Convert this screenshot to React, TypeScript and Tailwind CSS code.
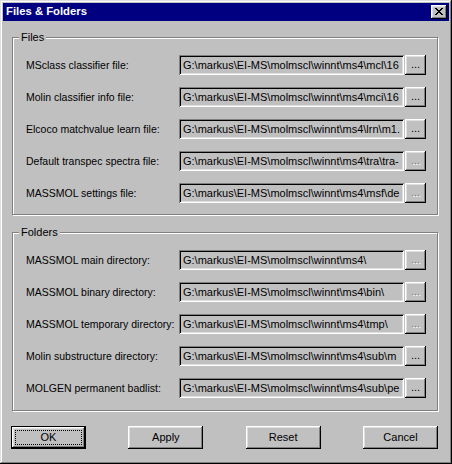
const FONT = { fontFamily: '"Liberation Sans", Arial, sans-serif' }

const RAISED =
  'shadow-[inset_-1px_-1px_0_#000,inset_1px_1px_0_#fff,inset_-2px_-2px_0_#808080,inset_2px_2px_0_#dfdfdf]'
const SUNKEN =
  'shadow-[inset_1px_1px_0_#808080,inset_-1px_-1px_0_#fff,inset_2px_2px_0_#000,inset_-2px_-2px_0_#dfdfdf]'

interface PathRow {
  label: string
  value: string
  disabled?: boolean
}

const FILES: PathRow[] = [
  { label: 'MSclass classifier file:', value: 'G:\\markus\\EI-MS\\molmscl\\winnt\\ms4\\mcl\\16' },
  { label: 'Molin classifier info file:', value: 'G:\\markus\\EI-MS\\molmscl\\winnt\\ms4\\mci\\16' },
  { label: 'Elcoco matchvalue learn file:', value: 'G:\\markus\\EI-MS\\molmscl\\winnt\\ms4\\lrn\\m1.' },
  { label: 'Default transpec spectra file:', value: 'G:\\markus\\EI-MS\\molmscl\\winnt\\ms4\\tra\\tra-', disabled: true },
  { label: 'MASSMOL settings file:', value: 'G:\\markus\\EI-MS\\molmscl\\winnt\\ms4\\msf\\de', disabled: true },
]

const FOLDERS: PathRow[] = [
  { label: 'MASSMOL main directory:', value: 'G:\\markus\\EI-MS\\molmscl\\winnt\\ms4\\', disabled: true },
  { label: 'MASSMOL binary directory:', value: 'G:\\markus\\EI-MS\\molmscl\\winnt\\ms4\\bin\\', disabled: true },
  { label: 'MASSMOL temporary directory:', value: 'G:\\markus\\EI-MS\\molmscl\\winnt\\ms4\\tmp\\', disabled: true },
  { label: 'Molin substructure directory:', value: 'G:\\markus\\EI-MS\\molmscl\\winnt\\ms4\\sub\\m' },
  { label: 'MOLGEN permanent badlist:', value: 'G:\\markus\\EI-MS\\molmscl\\winnt\\ms4\\sub\\pe' },
]

function Row({ row }: { row: PathRow }) {
  return (
    <div className="flex items-center h-[20px]">
      <span className="w-[153px] shrink-0 text-[10.5px] text-black whitespace-nowrap leading-none">{row.label}</span>
      <div className={`w-[225px] h-[20px] shrink-0 bg-[#c0c0c0] ${SUNKEN} flex items-center pl-[4px] pr-[2px] overflow-hidden`}>
        <span className="text-[11px] text-black whitespace-nowrap leading-none">{row.value}</span>
      </div>
      <button
        className={`ml-[1px] w-[21px] h-[20px] shrink-0 bg-[#c0c0c0] ${RAISED} flex items-center justify-center text-[11px] leading-none pb-[1px] ${
          row.disabled ? 'text-[#808080] [text-shadow:1px_1px_0_#fff]' : 'text-black'
        }`}
      >
        ...
      </button>
    </div>
  )
}

function Group({ title, rows, height }: { title: string; rows: PathRow[]; height: string }) {
  return (
    <div
      className={`relative ml-[9px] w-[426px] ${height} border border-[#808080] shadow-[1px_1px_0_#fff,inset_1px_1px_0_#fff] pt-[17px] pl-[13px] flex flex-col gap-[12px]`}
    >
      <span className="absolute top-[-7px] left-[6px] px-[2px] bg-[#c0c0c0] text-[11px] leading-[13px] text-black">
        {title}
      </span>
      {rows.map((r) => (
        <Row key={r.label} row={r} />
      ))}
    </div>
  )
}

function DialogButton({ label, isDefault }: { label: string; isDefault?: boolean }) {
  if (isDefault) {
    return (
      <button className="relative w-[75px] h-[23px] border border-black bg-[#c0c0c0] flex items-center justify-center">
        <span className={`absolute inset-0 ${RAISED}`} />
        <span className="absolute inset-[3px] border border-dotted border-black" />
        <span className="relative text-[11px] leading-none text-black">{label}</span>
      </button>
    )
  }
  return (
    <button className={`w-[75px] h-[23px] bg-[#c0c0c0] ${RAISED} text-[11px] leading-none text-black flex items-center justify-center`}>
      {label}
    </button>
  )
}

export default function App() {
  return (
    <div
      style={FONT}
      className="w-[452px] h-[464px] bg-[#c0c0c0] p-[3px] shadow-[inset_-1px_-1px_0_#000,inset_1px_1px_0_#dfdfdf,inset_-2px_-2px_0_#808080,inset_2px_2px_0_#fff] flex flex-col"
    >
      <div className="h-[18px] bg-[#000080] flex items-center justify-between pl-[3px] pr-[2px]">
        <span className="text-white font-bold text-[11.3px] leading-none">Files &amp; Folders</span>
        <button className={`w-[16px] h-[14px] bg-[#c0c0c0] ${RAISED} flex items-center justify-center pb-[1px] pr-[1px]`}>
          <svg width="8" height="7" viewBox="0 0 8 7" shapeRendering="crispEdges">
            <path
              fill="#000"
              d="M0 0h2v1h-2zM6 0h2v1h-2zM1 1h2v1h-2zM5 1h2v1h-2zM2 2h4v1h-4zM3 3h2v1h-2zM2 4h4v1h-4zM1 5h2v1h-2zM5 5h2v1h-2zM0 6h2v1h-2zM6 6h2v1h-2z"
            />
          </svg>
        </button>
      </div>

      <div className="mt-[16px]">
        <Group title="Files" rows={FILES} height="h-[178px]" />
      </div>
      <div className="mt-[17px]">
        <Group title="Folders" rows={FOLDERS} height="h-[179px]" />
      </div>

      <div className="mt-[15px] ml-[8px] w-[427px] flex justify-between">
        <DialogButton label="OK" isDefault />
        <DialogButton label="Apply" />
        <DialogButton label="Reset" />
        <DialogButton label="Cancel" />
      </div>
    </div>
  )
}
